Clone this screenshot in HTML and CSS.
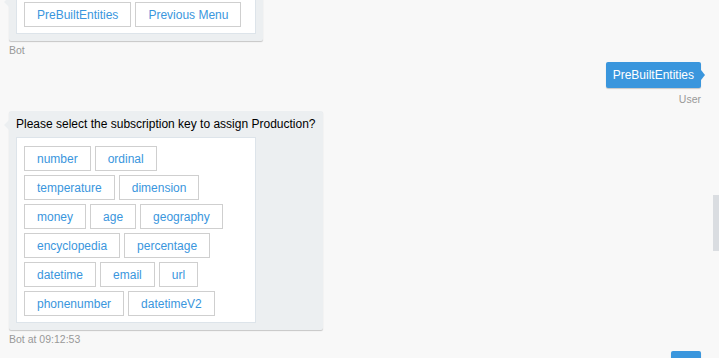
FILE: index.html
```html
<!DOCTYPE html>
<html lang="en">
<head>
  <meta charset="UTF-8" />
  <meta name="viewport" content="width=device-width, initial-scale=1.0"/>
  <title>Bot Chat</title>
  <link rel="stylesheet" href="styles.css">
</head>
<body>

  <div class="history">

    <div class="group from-bot">
      <div class="bubble">
        <div class="card">
          <button class="choice">PreBuiltEntities</button>
          <button class="choice">Previous Menu</button>
        </div>
      </div>
      <div class="from">Bot</div>
    </div>

    <div class="group from-me">
      <div class="bubble">PreBuiltEntities</div>
      <div class="from">User</div>
    </div>

    <div class="group from-bot">
      <div class="bubble">
        <div class="text">Please select the subscription key to assign Production?</div>
        <div class="card">
          <button class="choice">number</button>
          <button class="choice">ordinal</button>
          <button class="choice">temperature</button>
          <button class="choice">dimension</button>
          <button class="choice">money</button>
          <button class="choice">age</button>
          <button class="choice">geography</button>
          <button class="choice">encyclopedia</button>
          <button class="choice">percentage</button>
          <button class="choice">datetime</button>
          <button class="choice">email</button>
          <button class="choice">url</button>
          <button class="choice">phonenumber</button>
          <button class="choice">datetimeV2</button>
        </div>
      </div>
      <div class="from">Bot at 09:12:53</div>
    </div>

    <div class="group from-me">
      <div class="bubble next"></div>
    </div>

  </div>

  <div class="scroll-thumb"></div>

</body>
</html>
```

FILE: styles.css
```css
body {
  font-family: "Liberation Sans", Arial, sans-serif;
  margin: 0;
  background-color: #f8f8f8;
  overflow: hidden;
  height: 358px;
}

.history {
  display: flex;
  flex-direction: column;
  gap: 5px;
  padding: 0 18px 0 9px;
  margin-top: -12px;
}

.group {
  display: flex;
  flex-direction: column;
}

.from-bot {
  align-items: flex-start;
}

.from-me {
  align-items: flex-end;
}

.bubble {
  position: relative;
  border-radius: 2px;
  box-shadow: 0 1px 1px 0 rgba(0, 0, 0, 0.2);
  font-size: 12px;
  line-height: 16px;
}

.from-bot .bubble {
  background-color: #eceff1;
  color: #000;
  padding: 5px 7px 7px 7px;
}

/* callout on the left of bot messages */
.from-bot .bubble::before {
  content: "";
  position: absolute;
  left: -5px;
  top: 9px;
  border-style: solid;
  border-width: 5px 5px 5px 0;
  border-color: transparent #eceff1 transparent transparent;
}

.from-me .bubble {
  background-color: #3a96dd;
  color: white;
  padding: 5px 7px;
}

.from-me .bubble.next {
  width: 16px;
  height: 16px;
}

/* callout on the right of user messages */
.from-me .bubble::after {
  content: "";
  position: absolute;
  right: -4px;
  top: 8px;
  border-style: solid;
  border-width: 5px 0 5px 4px;
  border-color: transparent transparent transparent #3a96dd;
}

.text {
  margin-bottom: 5px;
}

.card {
  box-sizing: border-box;
  width: 240px;
  background-color: white;
  border: 1px solid #dde4ea;
  padding: 8px 7px 6px 7px;
  display: flex;
  flex-wrap: wrap;
  gap: 4px;
}

.choice {
  font-family: "Liberation Sans", Arial, sans-serif;
  font-size: 12px;
  height: 25px;
  padding: 0 12px;
  background-color: white;
  color: #3a96dd;
  border: 1px solid #cfcfcf;
  cursor: pointer;
}

.from {
  font-size: 10.5px;
  line-height: 14px;
  color: #999;
  margin-top: 2px;
}

.from-me .from {
  margin-top: 4px;
}

.scroll-thumb {
  position: fixed;
  left: 713px;
  top: 195px;
  width: 6px;
  height: 56px;
  background-color: #dadde1;
}
```
